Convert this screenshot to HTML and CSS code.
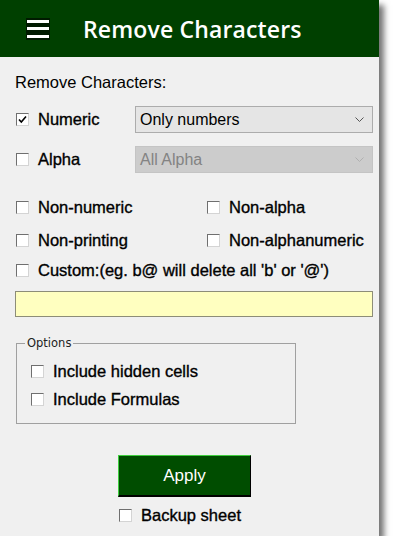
FILE: index.html
```html
<!DOCTYPE html>
<html>
<head>
	<title>Remove Characters</title>
	<link rel="stylesheet" href="styles.css">
</head>
<body>
	<main class="panel">
		<header class="head">
			<svg class="menu" width="24" height="22" viewBox="0 0 24 22">
				<rect x="0" y="0" width="24" height="22" fill="#001a00"/>
				<rect x="1" y="2" width="22" height="3" fill="#fff"/>
				<rect x="1" y="9" width="22" height="3" fill="#fff"/>
				<rect x="1" y="17" width="22" height="3" fill="#fff"/>
			</svg>
			<h1 class="title">Remove Characters</h1>
		</header>

		<section class="body">
			<div class="caption">Remove Characters:</div>

			<div class="row sel-row first">
				<label class="chk"><span class="box on"><svg width="11" height="11" viewBox="0 0 11 11"><path d="M2 5.5 L4.3 8 L9 2.5" fill="none" stroke="#000" stroke-width="1.6"/></svg></span>Numeric</label>
				<div class="select">Only numbers<svg class="chev" width="9" height="6" viewBox="0 0 9 6"><path d="M0.5 0.5 L4.5 4.5 L8.5 0.5" fill="none" stroke="#555" stroke-width="1"/></svg></div>
			</div>
			<div class="row sel-row second">
				<label class="chk"><span class="box"></span>Alpha</label>
				<div class="select off">All Alpha<svg class="chev" width="9" height="6" viewBox="0 0 9 6"><path d="M0.5 0.5 L4.5 4.5 L8.5 0.5" fill="none" stroke="#b0b0b0" stroke-width="1"/></svg></div>
			</div>

			<div class="row pair r3">
				<label class="chk"><span class="box"></span>Non-numeric</label>
				<label class="chk"><span class="box"></span>Non-alpha</label>
			</div>
			<div class="row pair r4">
				<label class="chk"><span class="box"></span>Non-printing</label>
				<label class="chk"><span class="box"></span>Non-alphanumeric</label>
			</div>
			<div class="row r5">
				<label class="chk"><span class="box"></span>Custom:(eg. b@ will delete all 'b' or '@')</label>
			</div>

			<div class="custom"></div>

			<fieldset class="options">
				<legend>Options</legend>
				<label class="chk"><span class="box"></span>Include hidden cells</label>
				<label class="chk"><span class="box"></span>Include Formulas</label>
			</fieldset>

			<div class="apply">Apply</div>
			<label class="chk backup"><span class="box"></span>Backup sheet</label>
		</section>
	</main>
</body>
</html>
```

FILE: styles.css
```css
*{
	margin: 0px;
	padding: 0px;
	box-sizing: border-box;
}
body{
	background: #fff;
	font-family: "Liberation Sans", Arial, sans-serif;
	color: #000;
}
.panel{
	width: 379px;
	height: 536px;
	background: #f0f0f0;
	box-shadow: 5px 5px 6px rgba(0,0,0,0.55);
}
.head{
	height: 57px;
	background: #004000;
	display: flex;
	align-items: center;
	padding-left: 26px;
}
.menu{
	display: block;
	margin-top: 1px;
}
.title{
	margin-left: 33px;
	font-family: "Open Sans", sans-serif;
	font-weight: 600;
	font-size: 23px;
	color: #fff;
	letter-spacing: 0.15px;
}
.body{
	padding: 15px 6px 0 15px;
	font-size: 16.5px;
}
.caption{
	height: 20px;
	line-height: 20px;
}
.row{
	display: flex;
	align-items: center;
}
.chk{
	display: flex;
	align-items: center;
	height: 20px;
	-webkit-text-stroke: 0.35px #000;
	white-space: nowrap;
}
.box{
	flex-shrink: 0;
	width: 13px;
	height: 13px;
	margin-left: 1px;
	margin-right: 9px;
	background: #fff;
	border: 1px solid;
	border-color: #6f6f6f #d4d4d4 #d4d4d4 #6f6f6f;
	display: flex;
	align-items: center;
	justify-content: center;
}
.box svg{
	display: block;
}
.sel-row{
	height: 27px;
}
.sel-row .chk{
	width: 120px;
	flex-shrink: 0;
}
.first{
	margin-top: 14px;
}
.second{
	margin-top: 13px;
}
.select{
	flex: 1;
	height: 27px;
	background: #e5e5e5;
	border: 1px solid #acacac;
	display: flex;
	align-items: center;
	justify-content: space-between;
	padding: 0 8px 0 4px;
	font-size: 16px;
}
.select.off{
	background: #cccccc;
	border-color: #c4c4c4;
	color: #838383;
}
.pair .chk:first-child{
	width: 191px;
	flex-shrink: 0;
}
.r3{
	margin-top: 24px;
}
.r4{
	margin-top: 13px;
}
.r5{
	margin-top: 10px;
}
.custom{
	margin-top: 11px;
	height: 26px;
	background: #ffffc0;
	border: 1px solid #8d8d78;
}
.options{
	margin-top: 19px;
	margin-left: 1px;
	width: 280px;
	height: 88px;
	border: 1px solid #a0a0a0;
	padding: 11px 0 0 0;
}
.options legend{
	margin-left: 8px;
	padding: 0 2px;
	font-family: "DejaVu Sans", sans-serif;
	font-size: 11.5px;
	color: #222;
	line-height: 14px;
}
.options .chk{
	margin: 0 0 8px 13px;
}
.apply{
	margin: 31px 0 0 103px;
	width: 133px;
	height: 42px;
	background: #004d00;
	border: 1px solid;
	border-color: #3fcf3f #000 #000 #3fcf3f;
	border-bottom-width: 2px;
	color: #fff;
	font-size: 17px;
	display: flex;
	align-items: center;
	justify-content: center;
}
.backup{
	margin: 8px 0 0 103px;
}
```
